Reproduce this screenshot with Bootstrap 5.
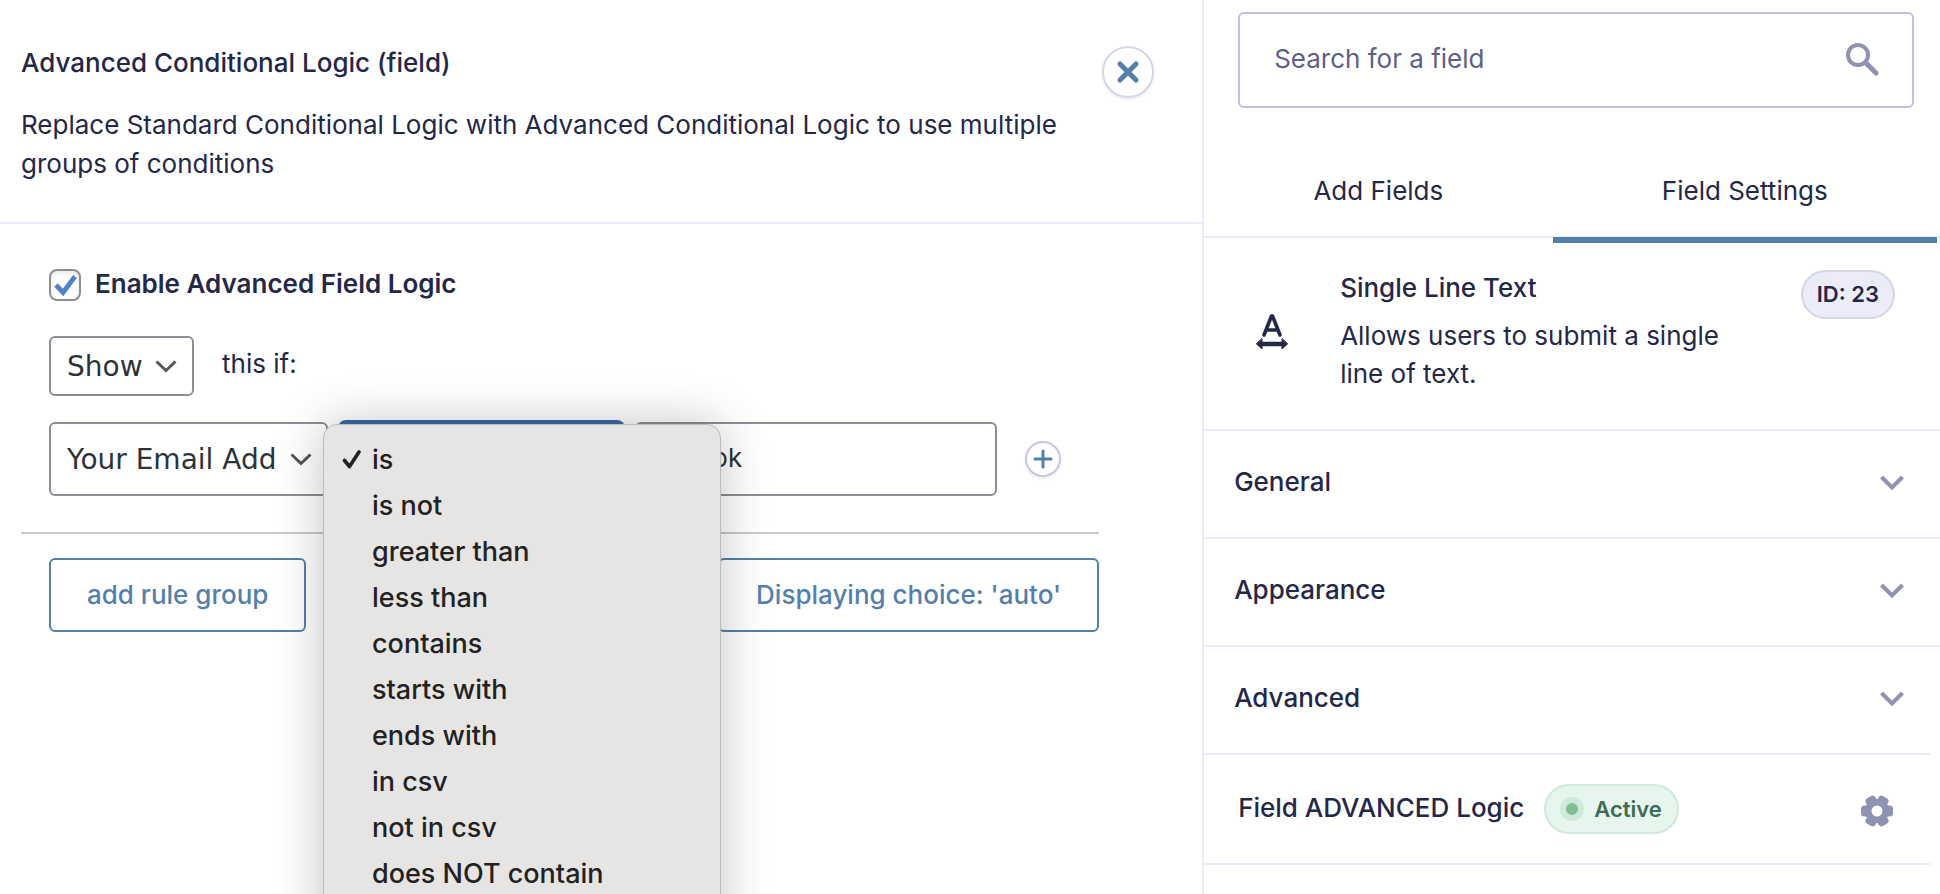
<!DOCTYPE html>
<html lang="en">
<head>
<meta charset="utf-8">
<meta name="viewport" content="width=device-width, initial-scale=1">
<title>Form editor – Advanced Conditional Logic</title>
<link href="https://cdn.jsdelivr.net/npm/bootstrap@5.3.0/dist/css/bootstrap.min.css" rel="stylesheet">
<style>
  :root {
    --ink: #242748;
    --line: #ecebf9;
    --accent: #557fab;
    --edge: #8d8d95;
  }
  body { font-family: Inter, sans-serif; font-size: 26px; line-height: 39px; color: var(--ink); background: #fff; }
  .editor { display: grid; grid-template-columns: 18fr 11fr; min-height: 100vh; max-height: 100vh; overflow: hidden; }
  h1, h2, h3, p { font-size: 26px; line-height: 39px; margin: 0; }
  h1, h2, h3 { font-weight: 500; color: var(--ink); }
  svg { display: block; flex: none; }

  /* Flyout panel */
  .flyout { border-right: 2px solid var(--line); min-width: 0; }
  .flyout-head { padding: 43px 48px 39px 21px; border-bottom: 2px solid var(--line); }
  .flyout-head p { margin-top: 23px; }
  .round-btn { display: flex; align-items: center; justify-content: center; flex: none; padding: 0; background: #fff; border: 2px solid #d5d7e9; border-radius: 50%; box-shadow: 0 2px 3px rgba(36,39,72,.07); }
  .round-close { width: 52px; height: 52px; margin-top: 3px; }
  .round-plus { width: 36px; height: 36px; border-color: #c8c7e0; margin: 0 38px 0 28px; }
  .flyout-body { padding: 40px 103px 0 21px; }
  .inset { padding-left: 28px; }
  .form-check-input.box { width: 32px; height: 32px; margin: 5px 14px 0 0; float: none; border: 2px solid var(--edge); border-radius: 8px; box-shadow: inset 0 2px 4px rgba(0,0,0,.1); flex: none; }
  .form-check-input.box:checked { background-color: #fff; border-color: var(--edge); background-size: 28px 28px; background-image: url("data:image/svg+xml,%3Csvg xmlns='http://www.w3.org/2000/svg' viewBox='0 0 28 28'%3E%3Cpath d='M5 14l7 7.500L24 5.500' fill='none' stroke='%234f82c6' stroke-width='4.800'/%3E%3C/svg%3E"); }
  .pick { width: auto; height: 74px; padding: 0 48px 0 16px; border: 2px solid var(--edge); border-radius: 6px; font: 28px "DejaVu Sans", sans-serif; color: #2c3338; background-color: #fff; background-size: 24px 24px; background-position: right 13px center; background-image: url("data:image/svg+xml,%3Csvg xmlns='http://www.w3.org/2000/svg' viewBox='0 0 24 24'%3E%3Cpath d='M2.500 7.500l9.500 9 9.500-9' fill='none' stroke='%23555' stroke-width='3'/%3E%3C/svg%3E"); }
  .pick-action { width: 145px; height: 60px; background-position: right 14px center; }
  .pick-field { width: 279px; text-overflow: clip; }
  .pick-operator { width: 283px; border-color: #3b6aa6; box-shadow: 0 0 0 2px #3b6aa6; }
  .action-row { margin-top: 33px; }
  .action-row label { padding-bottom: 6px; }
  .rule { margin-top: 26px; }
  .rule-value { flex: 1; min-width: 0; height: 74px; padding: 0 38px 3px; border: 2px solid var(--edge); border-radius: 6px; font-size: 26px; color: #2c3338; box-shadow: none; }
  .group-line { height: 2px; background: #c9c9cb; margin-top: 36px; }
  .btn-line { height: 74px; padding: 0 36px 2px; border: 2px solid var(--accent); border-radius: 6px; font-size: 26px; font-weight: 500; line-height: 39px; color: var(--accent); background: #fff; white-space: nowrap; }

  /* Operator menu, opened over the rule */
  .op-menu { position: absolute; z-index: 5; top: 2px; left: -13px; width: 398px; margin: 0; padding: 11px 0 60px; list-style: none; background: #e6e5e3; border: 1px solid #bcbcbc; border-radius: 14px; box-shadow: 0 0 50px rgba(0,0,0,.24); }
  .op-menu button { display: flex; align-items: center; width: 100%; height: 46px; padding: 0 0 0 48px; border: 0; background: none; font-size: 27px; font-weight: 500; color: #222; }
  .op-menu button[aria-selected=true] { padding-left: 18px; }
  .op-menu svg { margin-right: 10px; }

  /* Sidebar */
  .sidebar { min-width: 0; }
  .search { position: relative; margin: 12px 26px 0 34px; }
  .search input { height: 96px; padding: 0 90px 3px 34px; border: 2px solid #c2c2dd; border-radius: 6px; font-size: 26px; }
  .search input::placeholder { color: #5d5f89; opacity: 1; }
  .search svg { position: absolute; right: 35px; top: 30px; }
  .side-tabs { margin-top: 44px; padding-right: 3px; height: 91px; border-bottom: 0; box-shadow: inset 0 -5px 0 #fff, inset 0 -7px 0 var(--line); }
  .side-tabs .nav-link { height: 91px; padding: 19px 16px 0; border: 0; border-bottom: 6px solid transparent; border-radius: 0; color: var(--ink); text-align: center; }
  .side-tabs .nav-link.active { border-bottom-color: var(--accent); }
  .field-info { padding: 25px 45px 36px 50px; border-bottom: 2px solid var(--line); }
  .field-info p { width: 400px; line-height: 38px; margin-top: 10px; }
  .field-info svg { margin: 45px 50px 0 0; }
  .pill { display: flex; align-items: center; flex: none; height: 49px; border: 2px solid #d5d7e9; border-radius: 25px; background: #ecebf8; font-size: 22px; font-weight: 600; line-height: 33px; padding: 0 14px; margin-top: 2px; }
  .pill-on { height: 50px; color: #3f6b54; background: #e6f5ee; border-color: #cfe9da; padding: 0 15px 0 14px; margin: 2px 0 0 20px; }
  .pill-on i { width: 24px; height: 24px; margin-right: 10px; border: 6px solid #cfe9da; border-radius: 50%; background: #81bd95; }
  .fold { display: flex; width: 100%; height: 108px; align-items: center; justify-content: space-between; padding: 0 34px 5px 30px; border: 0; border-bottom: 2px solid var(--line); background: #fff; font-weight: 500; text-align: left; color: var(--ink); }
  .fold-short { width: auto; margin-right: 10px; }
  .fold-short.fold-btn { width: calc(100% - 10px); padding-right: 24px; }
  .logic-row { height: 110px; padding: 0 36px 2px 34px; }
  .logic-row h3 { padding-bottom: 2px; }
  .icon-btn { padding: 6px 0 0; border: 0; background: none; }
</style>
</head>
<body>
<main class="editor">
  <section class="flyout" aria-labelledby="flyout-title">
    <header class="flyout-head d-flex justify-content-between">
      <div>
        <h1 id="flyout-title">Advanced Conditional Logic (field)</h1>
        <p>Replace Standard Conditional Logic with Advanced Conditional Logic to use multiple groups of conditions</p>
      </div>
      <button type="button" class="round-btn round-close" aria-label="Close">
        <svg width="24" height="24" viewBox="0 0 24 24" fill="none" stroke="#557fab" stroke-width="5" stroke-linecap="round"><path d="M4 4l16 16M20 4L4 20"/></svg>
      </button>
    </header>

    <form class="flyout-body">
      <div class="inset d-flex align-items-start">
        <input class="form-check-input box" type="checkbox" id="enable" checked>
        <label for="enable" class="fw-semibold">Enable Advanced Field Logic</label>
      </div>

      <div class="inset action-row d-flex align-items-center">
        <select class="form-select pick pick-action" id="action" aria-label="Action">
          <option selected>Show</option><option>Hide</option>
        </select>
        <label for="action" class="ms-4 ps-1">this if:</label>
      </div>

      <div class="inset rule d-flex align-items-center">
        <select class="form-select pick pick-field" aria-label="Field">
          <option selected>Your Email Add</option>
        </select>
        <div class="position-relative mx-2 px-1">
          <select class="form-select pick pick-operator" aria-label="Operator">
            <option selected>is</option>
          </select>
          <ul class="op-menu" role="listbox" aria-label="Operators">
            <li><button type="button" role="option" aria-selected="true"><svg width="20" height="20" viewBox="0 0 20 20" fill="none" stroke="#222" stroke-width="3.600" stroke-linecap="round" stroke-linejoin="round"><path d="M2.500 11.500l5 6L17 3"/></svg>is</button></li>
            <li><button type="button" role="option">is not</button></li>
            <li><button type="button" role="option">greater than</button></li>
            <li><button type="button" role="option">less than</button></li>
            <li><button type="button" role="option">contains</button></li>
            <li><button type="button" role="option">starts with</button></li>
            <li><button type="button" role="option">ends with</button></li>
            <li><button type="button" role="option">in csv</button></li>
            <li><button type="button" role="option">not in csv</button></li>
            <li><button type="button" role="option">does NOT contain</button></li>
          </ul>
        </div>
        <input class="form-control rule-value" type="text" value="tiktok" aria-label="Value">
        <button type="button" class="round-btn round-plus" aria-label="Add rule">
          <svg width="20" height="20" viewBox="0 0 20 20" fill="none" stroke="#557fab" stroke-width="3" stroke-linecap="round"><path d="M10 2v16M2 10h16"/></svg>
        </button>
      </div>

      <div class="group-line"></div>

      <div class="inset d-flex justify-content-between mt-4">
        <button type="button" class="btn btn-line">add rule group</button>
        <button type="button" class="btn btn-line">Displaying choice: 'auto'</button>
      </div>
    </form>
  </section>

  <aside class="sidebar">
    <div class="search">
      <input type="search" class="form-control" placeholder="Search for a field" aria-label="Search for a field">
      <svg width="34" height="34" viewBox="0 0 34 34" fill="none" stroke="#9092b2"><circle cx="13" cy="13" r="10" stroke-width="4"/><path d="M22 22l9 9" stroke-width="5" stroke-linecap="round"/><path d="M20 20l4 4" stroke-width="4"/></svg>
    </div>

    <nav class="nav nav-fill side-tabs">
      <a class="nav-link nav-item" href="#">Add Fields</a>
      <a class="nav-link nav-item active" href="#" aria-current="page">Field Settings</a>
    </nav>

    <div class="field-info d-flex align-items-start">
      <svg width="36" height="38" viewBox="0 0 36 38" fill="none" stroke="#242748" stroke-linecap="round" stroke-linejoin="round"><path d="M10 22l7.500-19h1L26 22M12.500 17h11" stroke-width="3.600"/><path d="M6 31h24" stroke-width="4.500"/><path d="M8 26v10L2.500 31zM28 26v10l5.500-5z" fill="#242748" stroke-width="1"/></svg>
      <div class="flex-grow-1">
        <h2>Single Line Text</h2>
        <p>Allows users to submit a single line of text.</p>
      </div>
      <span class="pill">ID: 23</span>
    </div>

    <button type="button" class="fold">General
      <svg width="28" height="28" viewBox="0 0 28 28" fill="none" stroke="#9092b2" stroke-width="4"><path d="M3.500 9L14 19.500 24.500 9"/></svg></button>
    <button type="button" class="fold">Appearance
      <svg width="28" height="28" viewBox="0 0 28 28" fill="none" stroke="#9092b2" stroke-width="4"><path d="M3.500 9L14 19.500 24.500 9"/></svg></button>
    <button type="button" class="fold fold-short fold-btn">Advanced
      <svg width="28" height="28" viewBox="0 0 28 28" fill="none" stroke="#9092b2" stroke-width="4"><path d="M3.500 9L14 19.500 24.500 9"/></svg></button>
    <div class="fold fold-short logic-row">
      <div class="d-flex align-items-center">
        <h3>Field ADVANCED Logic</h3>
        <span class="pill pill-on"><i></i>Active</span>
      </div>
      <button type="button" class="icon-btn" aria-label="Advanced logic settings">
        <svg width="34" height="34" viewBox="0 0 34 34"><g fill="#9092b2"><circle cx="17" cy="17" r="12"/><rect x="11.500" y="1" width="11" height="32" rx="3.500" transform="rotate(30 17 17)"/><rect x="11.500" y="1" width="11" height="32" rx="3.500" transform="rotate(90 17 17)"/><rect x="11.500" y="1" width="11" height="32" rx="3.500" transform="rotate(150 17 17)"/></g><circle cx="17" cy="17" r="5.500" fill="#fff"/></svg>
      </button>
    </div>
  </aside>
</main>
<script src="https://cdn.jsdelivr.net/npm/bootstrap@5.3.0/dist/js/bootstrap.bundle.min.js"></script>
</body>
</html>
